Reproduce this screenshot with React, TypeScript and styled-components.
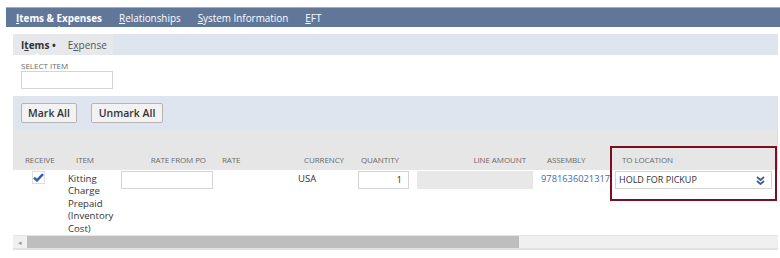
import React from "react";
import styled, { createGlobalStyle } from "styled-components";

const GlobalStyle = createGlobalStyle`
  html, body {
    margin: 0;
    padding: 0;
    background: #ffffff;
    font-family: "Open Sans", "Liberation Sans", sans-serif;
    color: #333333;
  }
`;

const Page = styled.div`
  width: 780px;
  height: 258px;
  overflow: hidden;
  padding-top: 7px;
  box-sizing: border-box;
`;

const TabBar = styled.div`
  margin-left: 6px;
  height: 20px;
  background: #607799;
  border-top: 1px solid #9fabbe;
  box-sizing: border-box;
  display: flex;
  align-items: center;
  padding-left: 10px;
  gap: 17px;
`;

const Tab = styled.span<{ $active?: boolean }>`
  position: relative;
  color: #ffffff;
  font-size: 9.9px;
  font-weight: ${(p) => (p.$active ? 700 : 400)};
  white-space: nowrap;

  u {
    text-decoration: underline;
    text-underline-offset: 1px;
  }

  ${(p) =>
    p.$active &&
    `
    &::after {
      content: "";
      position: absolute;
      left: 50%;
      bottom: -5px;
      margin-left: -4px;
      border-left: 4px solid transparent;
      border-right: 4px solid transparent;
      border-bottom: 4px solid #ffffff;
    }
  `}
`;

const Content = styled.div`
  margin-left: 13px;
  margin-top: 7px;
  width: 765px;
`;

const SubTabBar = styled.div`
  height: 21px;
  background: #dfe5ee;
  display: flex;
`;

const SubTabGroup = styled.div`
  width: 100px;
  background: #e6e8ec;
  display: flex;
  align-items: center;
  padding-left: 8px;
  gap: 12px;
  box-sizing: border-box;
`;

const SubTab = styled.span<{ $active?: boolean }>`
  position: relative;
  font-size: 10px;
  font-weight: ${(p) => (p.$active ? 700 : 400)};
  color: ${(p) => (p.$active ? "#333333" : "#555555")};

  u {
    text-underline-offset: 1px;
  }

  ${(p) =>
    p.$active &&
    `
    &::after {
      content: "";
      position: absolute;
      left: 12px;
      bottom: -5px;
      border-left: 4px solid transparent;
      border-right: 4px solid transparent;
      border-bottom: 4px solid #ffffff;
    }
  `}
`;

const SelectSection = styled.div`
  height: 41px;
  background: #ffffff;
  padding: 6px 0 0 8px;
  box-sizing: border-box;
`;

const FieldLabel = styled.div`
  font-size: 8px;
  color: #6a6a6a;
  text-transform: uppercase;
  line-height: 10px;
`;

const TextInput = styled.div<{ $w: number; $align?: string }>`
  width: ${(p) => p.$w}px;
  height: 18px;
  border: 1px solid #d4d4d4;
  background: #ffffff;
  box-sizing: border-box;
  font-size: 9.5px;
  line-height: 16px;
  text-align: ${(p) => p.$align || "left"};
  padding: 0 6px;
`;

const ButtonBar = styled.div`
  height: 33px;
  background: #dfe5ee;
  display: flex;
  align-items: center;
  padding-left: 8px;
  gap: 14px;
  box-sizing: border-box;
`;

const Button = styled.div<{ $w: number }>`
  width: ${(p) => p.$w}px;
  height: 20px;
  background: #f2f2f2;
  border: 1px solid #b5b5b5;
  border-radius: 2px;
  box-sizing: border-box;
  font-size: 10.5px;
  font-weight: 600;
  color: #333333;
  display: flex;
  align-items: center;
  justify-content: center;
`;

const TableWrap = styled.div`
  position: relative;
`;

const cols = "57px 48px 97px 75px 60px 62px 124px 74px 168px";

const HeaderRow = styled.div`
  height: 41px;
  background: #e6e6e6;
  display: grid;
  grid-template-columns: ${cols};
  align-items: end;
  padding-bottom: 5px;
  box-sizing: border-box;
  border-right: 1px solid #d8d8d8;
`;

const HeadCell = styled.div<{ $pl?: number; $pr?: number; $right?: boolean }>`
  font-size: 8px;
  color: #6a6a6a;
  text-transform: uppercase;
  letter-spacing: -0.1px;
  padding-left: ${(p) => p.$pl ?? 0}px;
  padding-right: ${(p) => p.$pr ?? 0}px;
  text-align: ${(p) => (p.$right ? "right" : "left")};
  white-space: nowrap;
`;

const DataRow = styled.div`
  height: 65px;
  background: #ffffff;
  display: grid;
  grid-template-columns: ${cols};
  align-items: start;
  padding-top: 1px;
  box-sizing: border-box;
`;

const Cell = styled.div<{ $pl?: number; $pt?: number }>`
  padding-left: ${(p) => p.$pl ?? 0}px;
  padding-top: ${(p) => p.$pt ?? 0}px;
  font-size: 9.5px;
  line-height: 12.4px;
  color: #333333;
`;

const ItemCell = styled.div`
  margin-left: -2px;
  padding-top: 2px;
  font-size: 9.6px;
  line-height: 12.4px;
  color: #333333;
`;

const CheckBox = styled.div`
  width: 13px;
  height: 13px;
  border: 1px solid #dcdcdc;
  box-sizing: border-box;
  display: flex;
  align-items: center;
  justify-content: center;
`;

const GrayBox = styled.div`
  width: 116px;
  height: 18px;
  background: #e8e8e8;
`;

const LinkText = styled.span`
  color: #3a6bb0;
  font-size: 9.3px;
`;

const SelectBox = styled.div`
  width: 157px;
  height: 18px;
  border: 1px solid #d4d4d4;
  box-sizing: border-box;
  display: flex;
  align-items: center;
  justify-content: space-between;
  padding: 0 6px 0 3px;
  font-size: 9px;
  color: #333333;
`;

const Highlight = styled.div`
  position: absolute;
  left: 597px;
  top: 17px;
  width: 167px;
  height: 55px;
  border: 2px solid #781020;
  box-sizing: border-box;
  pointer-events: none;
`;

const ScrollBar = styled.div`
  height: 12px;
  display: flex;
  background: #f0f0f0;
  border-top: 1px solid #e6e6e6;
  border-bottom: 2px solid #e2e2e2;
`;

const ScrollArrow = styled.div`
  width: 14px;
  display: flex;
  align-items: center;
  justify-content: center;
  font-size: 7px;
  color: #9a9a9a;
`;

const ScrollThumb = styled.div`
  width: 492px;
  background: #bebebe;
`;

export default function App() {
  return (
    <>
      <GlobalStyle />
      <Page>
        <TabBar>
          <Tab $active>
            <u>I</u>tems &amp; Expenses
          </Tab>
          <Tab>
            <u>R</u>elationships
          </Tab>
          <Tab>
            <u>S</u>ystem Information
          </Tab>
          <Tab>
            <u>E</u>FT
          </Tab>
        </TabBar>
        <Content>
          <SubTabBar>
            <SubTabGroup>
              <SubTab $active>
                I<u>t</u>ems •
              </SubTab>
              <SubTab>
                E<u>x</u>pense
              </SubTab>
            </SubTabGroup>
          </SubTabBar>
          <SelectSection>
            <FieldLabel>Select Item</FieldLabel>
            <TextInput $w={92} />
          </SelectSection>
          <ButtonBar>
            <Button $w={56}>Mark All</Button>
            <Button $w={72}>Unmark All</Button>
          </ButtonBar>
          <TableWrap>
            <HeaderRow>
              <HeadCell $pl={12}>Receive</HeadCell>
              <HeadCell $pl={6}>Item</HeadCell>
              <HeadCell $right $pr={9}>Rate From PO</HeadCell>
              <HeadCell $pl={7}>Rate</HeadCell>
              <HeadCell $right $pr={6}>Currency</HeadCell>
              <HeadCell $pl={11}>Quantity</HeadCell>
              <HeadCell $right $pr={10}>Line Amount</HeadCell>
              <HeadCell $pl={11}>Assembly</HeadCell>
              <HeadCell $pl={12}>To Location</HeadCell>
            </HeaderRow>
            <DataRow>
              <Cell $pl={19}>
                <CheckBox>
                  <svg width="11" height="9" viewBox="0 0 11 9">
                    <path d="M1 4.6 L4 7.4 L10 1.2" fill="none" stroke="#2a5fae" strokeWidth="2.4" />
                  </svg>
                </CheckBox>
              </Cell>
              <ItemCell>
                Kitting
                <br />
                Charge
                <br />
                Prepaid
                <br />
                (Inventory
                <br />
                Cost)
              </ItemCell>
              <Cell $pl={3}>
                <TextInput $w={92} />
              </Cell>
              <Cell />
              <Cell $pl={8} $pt={2}>
                USA
              </Cell>
              <Cell $pl={8}>
                <TextInput $w={51} $align="right">
                  1
                </TextInput>
              </Cell>
              <Cell $pl={5}>
                <GrayBox />
              </Cell>
              <Cell $pl={5} $pt={2}>
                <LinkText>9781636021317</LinkText>
              </Cell>
              <Cell $pl={5}>
                <SelectBox>
                  <span>HOLD FOR PICKUP</span>
                  <svg width="9" height="9" viewBox="0 0 9 9">
                    <path d="M1 1 L4.5 4 L8 1 M1 5 L4.5 8 L8 5" fill="none" stroke="#3d5f95" strokeWidth="1.8" />
                  </svg>
                </SelectBox>
              </Cell>
            </DataRow>
            <ScrollBar>
              <ScrollArrow>◂</ScrollArrow>
              <ScrollThumb />
            </ScrollBar>
            <Highlight />
          </TableWrap>
        </Content>
      </Page>
    </>
  );
}
